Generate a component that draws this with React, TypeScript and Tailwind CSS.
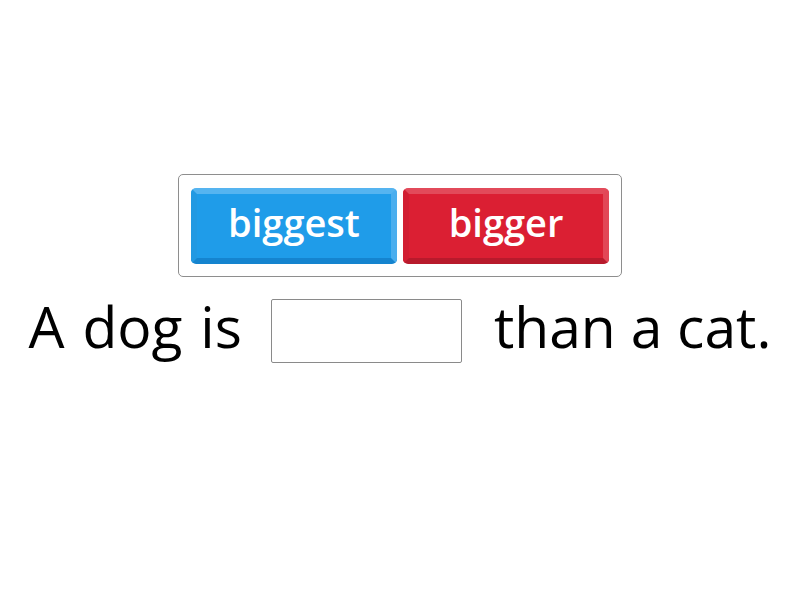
import React from "react";

const choices = [
  {
    label: "biggest",
    face: "bg-[#1f9ce9] border-t-[#55b4f0] border-r-[#4aaeee] border-b-[#1584cf] border-l-[#2299e2]",
  },
  {
    label: "bigger",
    face: "bg-[#db1f33] border-t-[#e24a5a] border-r-[#e24757] border-b-[#b81a2c] border-l-[#d21e32]",
  },
];

const ChoiceTile = ({ label, face }: { label: string; face: string }) => (
  <div
    className={`flex h-[76px] w-[206px] items-center justify-center rounded-[5px] border-[6px] text-[38px] font-semibold text-white ${face}`}
  >
    <span className="-mt-[7px]">{label}</span>
  </div>
);

export default function App() {
  return (
    <div
      className="flex h-[600px] w-[800px] flex-col items-center bg-white pt-[174px]"
      style={{ fontFamily: '"Open Sans", sans-serif' }}
    >
      <div className="flex gap-[6px] rounded-[5px] border border-[#8e8e8e] px-[12px] pt-[13px] pb-[12px]">
        {choices.map((c) => (
          <ChoiceTile key={c.label} label={c.label} face={c.face} />
        ))}
      </div>
      <div className="mt-[22px] flex items-center text-[57px] leading-none text-black">
        <span className="-mt-[10px] [word-spacing:3px]">A dog is</span>
        <div className="mr-[32px] ml-[29px] h-[64px] w-[191px] rounded-[2px] border border-[#8a8a8a] bg-white" />
        <span className="-mt-[10px]">than a cat.</span>
      </div>
    </div>
  );
}
